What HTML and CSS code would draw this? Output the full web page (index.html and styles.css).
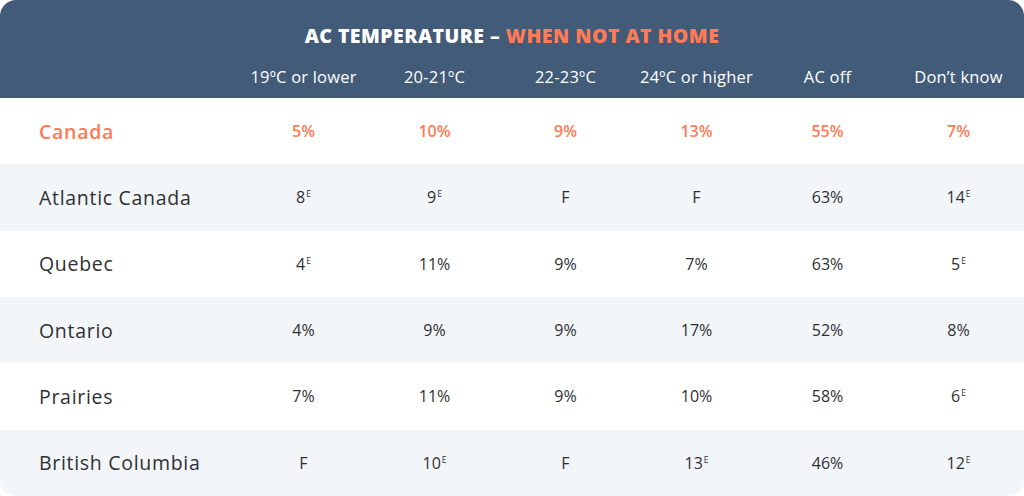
FILE: index.html
```html
<!DOCTYPE html>
<html lang="en">
<head>
<meta charset="utf-8">
<title>AC Temperature – When not at home</title>
<link rel="stylesheet" href="styles.css">
</head>
<body>
<div class="card">
  <div class="head">
    <div class="title">AC TEMPERATURE – <span class="accent">WHEN NOT AT HOME</span></div>
    <div class="row labels">
      <div class="cell name"></div>
      <div class="cell">19ºC or lower</div>
      <div class="cell">20-21ºC</div>
      <div class="cell">22-23ºC</div>
      <div class="cell">24ºC or higher</div>
      <div class="cell">AC off</div>
      <div class="cell">Don’t know</div>
    </div>
  </div>
  <div class="row data total">
    <div class="cell name">Canada</div>
    <div class="cell">5%</div>
    <div class="cell">10%</div>
    <div class="cell">9%</div>
    <div class="cell">13%</div>
    <div class="cell">55%</div>
    <div class="cell">7%</div>
  </div>
  <div class="row data alt">
    <div class="cell name">Atlantic Canada</div>
    <div class="cell">8<sup>E</sup></div>
    <div class="cell">9<sup>E</sup></div>
    <div class="cell">F</div>
    <div class="cell">F</div>
    <div class="cell">63%</div>
    <div class="cell">14<sup>E</sup></div>
  </div>
  <div class="row data">
    <div class="cell name">Quebec</div>
    <div class="cell">4<sup>E</sup></div>
    <div class="cell">11%</div>
    <div class="cell">9%</div>
    <div class="cell">7%</div>
    <div class="cell">63%</div>
    <div class="cell">5<sup>E</sup></div>
  </div>
  <div class="row data alt">
    <div class="cell name">Ontario</div>
    <div class="cell">4%</div>
    <div class="cell">9%</div>
    <div class="cell">9%</div>
    <div class="cell">17%</div>
    <div class="cell">52%</div>
    <div class="cell">8%</div>
  </div>
  <div class="row data">
    <div class="cell name">Prairies</div>
    <div class="cell">7%</div>
    <div class="cell">11%</div>
    <div class="cell">9%</div>
    <div class="cell">10%</div>
    <div class="cell">58%</div>
    <div class="cell">6<sup>E</sup></div>
  </div>
  <div class="row data alt last">
    <div class="cell name">British Columbia</div>
    <div class="cell">F</div>
    <div class="cell">10<sup>E</sup></div>
    <div class="cell">F</div>
    <div class="cell">13<sup>E</sup></div>
    <div class="cell">46%</div>
    <div class="cell">12<sup>E</sup></div>
  </div>
</div>
</body>
</html>
```
FILE: styles.css
```css
* { box-sizing: border-box; }
html, body {
  margin: 0;
  padding: 0;
  background: #ffffff;
}
body {
  font-family: "Open Sans", "Noto Sans", "Liberation Sans", sans-serif;
  color: #2f3033;
}
.card {
  width: 1024px;
  height: 496px;
  display: flex;
  flex-direction: column;
}
.head {
  background: #425b78;
  border-radius: 16px 16px 0 0;
  height: 98px;
  display: flex;
  flex-direction: column;
  color: #ffffff;
}
.title {
  text-align: center;
  font-weight: 800;
  font-size: 19.5px;
  letter-spacing: 0.45px;
  padding-top: 22px;
  height: 58px;
}
.accent { color: #ff7a55; }
.row {
  display: grid;
  grid-template-columns: 238px repeat(6, 131px);
  align-items: center;
}
.labels {
  font-size: 16.5px;
  letter-spacing: 0.2px;
  height: 40px;
  padding-bottom: 4px;
}
.cell { text-align: center; }
.cell.name {
  text-align: left;
  padding-left: 39px;
  font-size: 19.5px;
  letter-spacing: 0.7px;
}
.data {
  height: 66.33px;
  font-size: 16px;
  background: #ffffff;
}
.data.alt { background: #f3f6f9; }
.data.last { border-radius: 0 0 15px 15px; }
.total {
  color: #ff7a55;
  font-weight: 600;
}
.total .cell.name { font-weight: 600; }
sup {
  font-size: 8.5px;
  vertical-align: 0;
  position: relative;
  top: -6px;
  margin-left: 1px;
}
```
